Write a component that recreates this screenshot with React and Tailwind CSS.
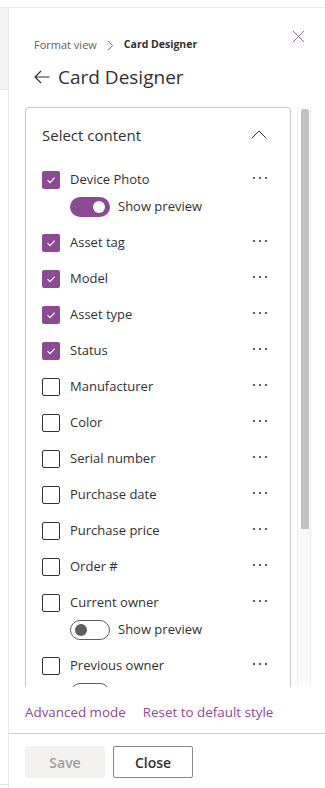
import React from "react";

const items = [
  { label: "Device Photo", checked: true, preview: "on" },
  { label: "Asset tag", checked: true },
  { label: "Model", checked: true },
  { label: "Asset type", checked: true },
  { label: "Status", checked: true },
  { label: "Manufacturer" },
  { label: "Color" },
  { label: "Serial number" },
  { label: "Purchase date" },
  { label: "Purchase price" },
  { label: "Order #" },
  { label: "Current owner", preview: "off" },
  { label: "Previous owner", preview: "off" },
  { label: "Previous location" },
];

const Checkbox = ({ checked }) =>
  checked ? (
    <div className="w-[18px] h-[18px] rounded-[2px] bg-[#8b4a91] flex items-center justify-center shrink-0">
      <svg width="12" height="12" viewBox="0 0 12 12" fill="none">
        <path d="M2.5 6.2 L5 8.6 L9.6 3.6" stroke="white" strokeWidth="1.1" />
      </svg>
    </div>
  ) : (
    <div className="w-[18px] h-[18px] rounded-[2px] border border-[#323130] bg-white shrink-0" />
  );

const Toggle = ({ on }) =>
  on ? (
    <div className="w-[40px] h-[20px] rounded-full bg-[#8b4a91] flex items-center justify-end pr-[5px]">
      <div className="w-[12px] h-[12px] rounded-full bg-white" />
    </div>
  ) : (
    <div className="w-[40px] h-[20px] rounded-full border border-[#605e5c] bg-white flex items-center pl-[4px]">
      <div className="w-[12px] h-[12px] rounded-full bg-[#605e5c]" />
    </div>
  );

const Dots = () => (
  <div className="flex gap-[4px] -mt-[4px] pr-px">
    <div className="w-[2px] h-[2px] bg-[#605e5c]" />
    <div className="w-[2px] h-[2px] bg-[#605e5c]" />
    <div className="w-[2px] h-[2px] bg-[#605e5c]" />
  </div>
);

export default function App() {
  return (
    <div
      className="w-[325px] h-[788px] bg-white flex flex-col overflow-hidden text-[#323130]"
      style={{ fontFamily: "'Open Sans', 'Noto Sans', sans-serif" }}
    >
      <div className="h-[8px] shrink-0 border-b border-[#ebebeb]" />
      <div className="flex flex-1 min-h-0">
        <div className="w-[8px] shrink-0 flex flex-col">
          <div className="h-[82px] bg-[#f4f4f4] border-b border-[#e3e3e3]" />
          <div className="flex-1" />
          <div className="h-[4px] border-t border-[#e3e3e3]" />
        </div>
        <div className="flex-1 border-l border-[#e6e6e6] flex flex-col min-w-0">
          <div className="flex items-start justify-between pt-[22px]">
            <div className="mt-[5px] h-[20px] pl-[25px] flex items-center text-[11px]">
              <span className="text-[#605e5c]">Format view</span>
              <svg className="mx-[10px]" width="7" height="11" viewBox="0 0 7 11" fill="none">
                <path d="M1 0.8 L5.6 5.5 L1 10.2" stroke="#605e5c" strokeWidth="0.9" />
              </svg>
              <span className="font-bold text-[10.5px] text-[#323130]">Card Designer</span>
            </div>
            <svg className="mr-[20px]" width="13" height="13" viewBox="0 0 13 13" fill="none">
              <path d="M1 1 L12 12 M12 1 L1 12" stroke="#8f6d92" strokeWidth="1" />
            </svg>
          </div>
          <div className="mt-[7px] h-[30px] pl-[25px] flex items-center gap-[8px]">
            <svg width="16" height="14" viewBox="0 0 16 14" fill="none">
              <path d="M15.5 7 H1 M7 1 L1 7 L7 13" stroke="#323130" strokeWidth="1.2" />
            </svg>
            <span className="text-[19px] leading-none">Card Designer</span>
          </div>

          <div className="mt-[15px] h-[580px] shrink-0 overflow-hidden flex pl-[16px] gap-[6px]">
            <div className="w-[266px] shrink-0 self-start border border-[#c8c6c4] rounded-[4px] pl-[16px] pr-[22px]">
              <div className="h-[54px] pt-[1px] flex items-center justify-between">
                <span className="text-[15px]">Select content</span>
                <svg className="mr-[1px] -mt-[3px]" width="16" height="9" viewBox="0 0 16 9" fill="none">
                  <path d="M0.6 8.4 L8 1 L15.4 8.4" stroke="#323130" strokeWidth="1" />
                </svg>
              </div>
              {items.map((it) => (
                <div key={it.label}>
                  <div className="h-[36px] flex items-center">
                    <Checkbox checked={it.checked} />
                    <span className="ml-[10px] text-[13px] flex-1">{it.label}</span>
                    <Dots />
                  </div>
                  {it.preview && (
                    <div className="-mt-px mb-[8px] h-[20px] pl-[28px] flex items-center gap-[8px]">
                      <Toggle on={it.preview === "on"} />
                      <span className="text-[13px]">Show preview</span>
                    </div>
                  )}
                </div>
              ))}
            </div>
            <div className="w-[14px] shrink-0 border-x border-[#ececec] bg-[#fafafa] pt-[2px] pl-[3px]">
              <div className="w-[8px] h-[420px] bg-[#c1c1c1] rounded-t-[3px] rounded-b-[1px]" />
            </div>
          </div>

          <div className="h-[46px] pt-[4px] pl-[16px] flex items-center gap-[17px] text-[13.4px] text-[#8b4a91]">
            <span>Advanced mode</span>
            <span>Reset to default style</span>
          </div>
          <div className="border-t border-[#d2d0ce] pt-[12px] pl-[16px] flex gap-[8px]">
            <div className="w-[80px] h-[32px] rounded-[2px] bg-[#f3f2f1] flex items-center justify-center text-[14px] font-semibold text-[#a19f9d]">
              Save
            </div>
            <div className="w-[80px] h-[32px] rounded-[2px] border border-[#8a8886] bg-white flex items-center justify-center text-[14px] font-semibold text-[#323130]">
              Close
            </div>
          </div>
        </div>
      </div>
    </div>
  );
}
